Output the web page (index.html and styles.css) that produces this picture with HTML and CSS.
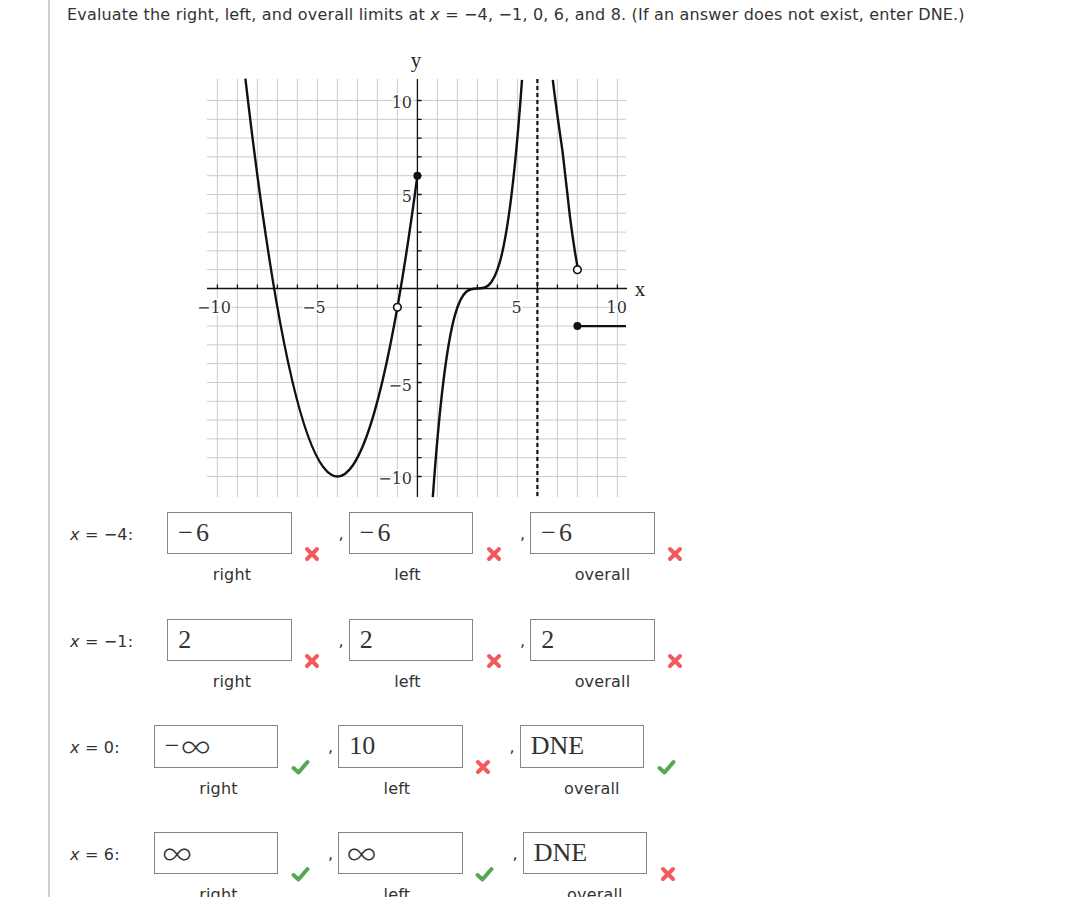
FILE: index.html
```html
<!DOCTYPE html>
<html>
<head>
<meta charset="utf-8">
<link rel="stylesheet" href="styles.css">
</head>
<body>
<div class="page">
  <p class="prompt">Evaluate the right, left, and overall limits at <i>x</i> = −4, −1, 0, 6, and 8. (If an answer does not exist, enter DNE.)</p>

  <svg class="graph" width="470" height="460" viewBox="190 45 470 460" xmlns="http://www.w3.org/2000/svg">
    <g class="grid">
      <line x1="217.4" y1="79" x2="217.4" y2="497"/><line x1="237.4" y1="79" x2="237.4" y2="497"/>
      <line x1="257.4" y1="79" x2="257.4" y2="497"/><line x1="277.4" y1="79" x2="277.4" y2="497"/>
      <line x1="297.4" y1="79" x2="297.4" y2="497"/><line x1="317.4" y1="79" x2="317.4" y2="497"/>
      <line x1="337.4" y1="79" x2="337.4" y2="497"/><line x1="357.4" y1="79" x2="357.4" y2="497"/>
      <line x1="377.4" y1="79" x2="377.4" y2="497"/><line x1="397.4" y1="79" x2="397.4" y2="497"/>
      <line x1="437.4" y1="79" x2="437.4" y2="497"/><line x1="457.4" y1="79" x2="457.4" y2="497"/>
      <line x1="477.4" y1="79" x2="477.4" y2="497"/><line x1="497.4" y1="79" x2="497.4" y2="497"/>
      <line x1="517.4" y1="79" x2="517.4" y2="497"/><line x1="537.4" y1="79" x2="537.4" y2="497"/>
      <line x1="557.4" y1="79" x2="557.4" y2="497"/><line x1="577.4" y1="79" x2="577.4" y2="497"/>
      <line x1="597.4" y1="79" x2="597.4" y2="497"/><line x1="617.4" y1="79" x2="617.4" y2="497"/>
      <line x1="207" y1="100.5" x2="626" y2="100.5"/><line x1="207" y1="119.3" x2="626" y2="119.3"/>
      <line x1="207" y1="138.1" x2="626" y2="138.1"/><line x1="207" y1="156.9" x2="626" y2="156.9"/>
      <line x1="207" y1="175.7" x2="626" y2="175.7"/><line x1="207" y1="194.5" x2="626" y2="194.5"/>
      <line x1="207" y1="213.3" x2="626" y2="213.3"/><line x1="207" y1="232.1" x2="626" y2="232.1"/>
      <line x1="207" y1="250.9" x2="626" y2="250.9"/><line x1="207" y1="269.7" x2="626" y2="269.7"/>
      <line x1="207" y1="307.3" x2="626" y2="307.3"/><line x1="207" y1="326.1" x2="626" y2="326.1"/>
      <line x1="207" y1="344.9" x2="626" y2="344.9"/><line x1="207" y1="363.7" x2="626" y2="363.7"/>
      <line x1="207" y1="382.5" x2="626" y2="382.5"/><line x1="207" y1="401.3" x2="626" y2="401.3"/>
      <line x1="207" y1="420.1" x2="626" y2="420.1"/><line x1="207" y1="438.9" x2="626" y2="438.9"/>
      <line x1="207" y1="457.7" x2="626" y2="457.7"/><line x1="207" y1="476.5" x2="626" y2="476.5"/>
    </g>
    <g class="axis">
      <line x1="207" y1="288.5" x2="627" y2="288.5"/>
      <line x1="417.4" y1="79" x2="417.4" y2="497"/>
      <path d="M217.4 284.5V288.5M237.4 284.5V288.5M257.4 284.5V288.5M277.4 284.5V288.5M297.4 284.5V288.5M317.4 284.5V288.5M337.4 284.5V288.5M357.4 284.5V288.5M377.4 284.5V288.5M397.4 284.5V288.5M437.4 284.5V288.5M457.4 284.5V288.5M477.4 284.5V288.5M497.4 284.5V288.5M517.4 284.5V288.5M537.4 284.5V288.5M557.4 284.5V288.5M577.4 284.5V288.5M597.4 284.5V288.5M617.4 284.5V288.5"/>
      <path d="M417.4 100.5H421.6M417.4 119.3H421.6M417.4 138.1H421.6M417.4 156.9H421.6M417.4 175.7H421.6M417.4 194.5H421.6M417.4 213.3H421.6M417.4 232.1H421.6M417.4 250.9H421.6M417.4 269.7H421.6M417.4 307.3H421.6M417.4 326.1H421.6M417.4 344.9H421.6M417.4 363.7H421.6M417.4 382.5H421.6M417.4 401.3H421.6M417.4 420.1H421.6M417.4 438.9H421.6M417.4 457.7H421.6M417.4 476.5H421.6"/>
    </g>
    <g class="ticklbl">
      <text x="214" y="312.5" text-anchor="middle">−10</text>
      <text x="314" y="312.5" text-anchor="middle">−5</text>
      <text x="516.7" y="312.5" text-anchor="middle">5</text>
      <text x="616.7" y="312.5" text-anchor="middle">10</text>
      <text x="412" y="108" text-anchor="end">10</text>
      <text x="412" y="201.5" text-anchor="end">5</text>
      <text x="412" y="390.5" text-anchor="end">−5</text>
      <text x="412" y="484" text-anchor="end">−10</text>
    </g>
    <text class="axlbl" x="416" y="67" text-anchor="middle">y</text>
    <text class="axlbl" x="640" y="296" text-anchor="middle">x</text>
    <line class="asym" x1="537.4" y1="79" x2="537.4" y2="497"/>
    <g class="curve">
      <path d="M245.4 78.7Q331.4 822.4 417.4 175.7"/>
      <path d="M432.8 497.2C462.5 79.8 492.3 497.2 522 79.8"/>
      <path d="M552.8 79.8C555.5 103 559 127 562.4 150.3C565 172 567.5 195 570 217.1C572.5 236 575 254 577.4 266"/>
      <line x1="577.4" y1="326.1" x2="626" y2="326.1"/>
    </g>
    <circle class="dot" cx="417.4" cy="175.7" r="4"/>
    <circle class="dot" cx="577.4" cy="326.1" r="4"/>
    <circle class="hole" cx="397.4" cy="307.3" r="3.8"/>
    <circle class="hole" cx="577.4" cy="269.7" r="3.8"/>
  </svg>

  <div class="rows">
    <div class="row">
      <span class="xlbl"><i>x</i> = −4:</span>
      <div class="field"><div class="box"><span class="mn">−</span>6</div><div class="cap cr">right</div></div>
      <span class="mark"><svg class="ix" width="16" height="16" viewBox="0 0 16 16"><path d="M3 3L13 13M13 3L3 13"/></svg></span>
      <span class="sep">,</span>
      <div class="field"><div class="box"><span class="mn">−</span>6</div><div class="cap cl">left</div></div>
      <span class="mark"><svg class="ix" width="16" height="16" viewBox="0 0 16 16"><path d="M3 3L13 13M13 3L3 13"/></svg></span>
      <span class="sep">,</span>
      <div class="field"><div class="box"><span class="mn">−</span>6</div><div class="cap co">overall</div></div>
      <span class="mark"><svg class="ix" width="16" height="16" viewBox="0 0 16 16"><path d="M3 3L13 13M13 3L3 13"/></svg></span>
    </div>
    <div class="row">
      <span class="xlbl"><i>x</i> = −1:</span>
      <div class="field"><div class="box">2</div><div class="cap cr">right</div></div>
      <span class="mark"><svg class="ix" width="16" height="16" viewBox="0 0 16 16"><path d="M3 3L13 13M13 3L3 13"/></svg></span>
      <span class="sep">,</span>
      <div class="field"><div class="box">2</div><div class="cap cl">left</div></div>
      <span class="mark"><svg class="ix" width="16" height="16" viewBox="0 0 16 16"><path d="M3 3L13 13M13 3L3 13"/></svg></span>
      <span class="sep">,</span>
      <div class="field"><div class="box">2</div><div class="cap co">overall</div></div>
      <span class="mark"><svg class="ix" width="16" height="16" viewBox="0 0 16 16"><path d="M3 3L13 13M13 3L3 13"/></svg></span>
    </div>
    <div class="row">
      <span class="xlbl"><i>x</i> = 0:</span>
      <div class="field"><div class="box"><span class="mn0">−</span><span class="inf">∞</span></div><div class="cap cr">right</div></div>
      <span class="mark"><svg class="ic" width="19" height="16" viewBox="0 0 19 16"><path d="M2.5 9L7.5 13.5L16.5 3"/></svg></span>
      <span class="sep">,</span>
      <div class="field"><div class="box">10</div><div class="cap cl">left</div></div>
      <span class="mark"><svg class="ix" width="16" height="16" viewBox="0 0 16 16"><path d="M3 3L13 13M13 3L3 13"/></svg></span>
      <span class="sep">,</span>
      <div class="field"><div class="box">DNE</div><div class="cap co">overall</div></div>
      <span class="mark"><svg class="ic" width="19" height="16" viewBox="0 0 19 16"><path d="M2.5 9L7.5 13.5L16.5 3"/></svg></span>
    </div>
    <div class="row">
      <span class="xlbl"><i>x</i> = 6:</span>
      <div class="field"><div class="box"><span class="inf solo">∞</span></div><div class="cap cr">right</div></div>
      <span class="mark"><svg class="ic" width="19" height="16" viewBox="0 0 19 16"><path d="M2.5 9L7.5 13.5L16.5 3"/></svg></span>
      <span class="sep">,</span>
      <div class="field"><div class="box"><span class="inf solo">∞</span></div><div class="cap cl">left</div></div>
      <span class="mark"><svg class="ic" width="19" height="16" viewBox="0 0 19 16"><path d="M2.5 9L7.5 13.5L16.5 3"/></svg></span>
      <span class="sep">,</span>
      <div class="field"><div class="box">DNE</div><div class="cap co">overall</div></div>
      <span class="mark"><svg class="ix" width="16" height="16" viewBox="0 0 16 16"><path d="M3 3L13 13M13 3L3 13"/></svg></span>
    </div>
  </div>
</div>
</body>
</html>
```
FILE: styles.css
```css
html, body {
  margin: 0;
  padding: 0;
  background: #fff;
  overflow: hidden;
}
.page {
  margin-left: 48px;
  border-left: 2px solid #cfcfcf;
  padding-left: 17px;
  height: 897px;
  font-family: "DejaVu Sans", Verdana, sans-serif;
  font-size: 16px;
  letter-spacing: 0.18px;
  color: #333;
}
.prompt {
  margin: 0;
  padding-top: 6px;
  line-height: 18px;
}
.graph {
  display: block;
  margin: 21px 0 0 123px;
}
.grid line {
  stroke: #cbcbcb;
  stroke-width: 1;
}
.axis line, .axis path {
  stroke: #111;
  stroke-width: 1.3;
  fill: none;
}
.ticklbl text {
  font-family: "DejaVu Serif", "Liberation Serif", serif;
  font-size: 16px;
  letter-spacing: 0;
  fill: #333;
  stroke: #fff;
  stroke-width: 3px;
  paint-order: stroke;
}
.axlbl {
  font-family: "Liberation Serif", "Times New Roman", serif;
  font-size: 21px;
  letter-spacing: 0;
  fill: #222;
}
.asym {
  stroke: #111;
  stroke-width: 2.2;
  stroke-dasharray: 4 3;
}
.curve path, .curve line {
  fill: none;
  stroke: #111;
  stroke-width: 2.4;
}
.dot {
  fill: #111;
}
.hole {
  fill: #fff;
  stroke: #111;
  stroke-width: 1.6;
}
.rows {
  padding-left: 3px;
  margin-top: 7px;
}
.row {
  display: flex;
  align-items: flex-start;
  height: 106.7px;
}
.xlbl {
  margin-top: 14px;
  margin-right: 34px;
  line-height: 18px;
  white-space: nowrap;
}
.field {
  display: flex;
  flex-direction: column;
  width: 124.4px;
}
.box {
  box-sizing: border-box;
  height: 42.3px;
  border: 1px solid #858585;
  padding-left: 10px;
  font-family: "Liberation Serif", "Times New Roman", serif;
  font-size: 26px;
  letter-spacing: 0;
  line-height: 40px;
  color: #333;
  white-space: nowrap;
}
.mn {
  margin-right: 3px;
}
.mn0 {
  margin-right: 1px;
}
.inf {
  display: inline-block;
  font-family: "Inter", sans-serif;
  font-weight: 200;
  font-size: 34px;
  line-height: 40px;
  vertical-align: top;
}
.solo {
  margin-left: -3px;
}
.cap {
  margin-top: 12px;
  text-align: center;
  line-height: 18px;
}
.cr { padding-left: 5px; }
.cl { padding-right: 7px; }
.co { padding-left: 20px; }
.mark {
  display: block;
  margin-left: 12.5px;
  margin-top: 34px;
  height: 16px;
}
.mark svg {
  display: block;
}
.ix path {
  fill: none;
  stroke: #f25a5e;
  stroke-width: 4;
  stroke-linecap: round;
}
.ic path {
  fill: none;
  stroke: #55a955;
  stroke-width: 4;
  stroke-linecap: round;
  stroke-linejoin: round;
}
.sep {
  width: 28.6px;
  box-sizing: border-box;
  padding-right: 5px;
  text-align: right;
  margin-top: 13px;
  line-height: 18px;
}
```
